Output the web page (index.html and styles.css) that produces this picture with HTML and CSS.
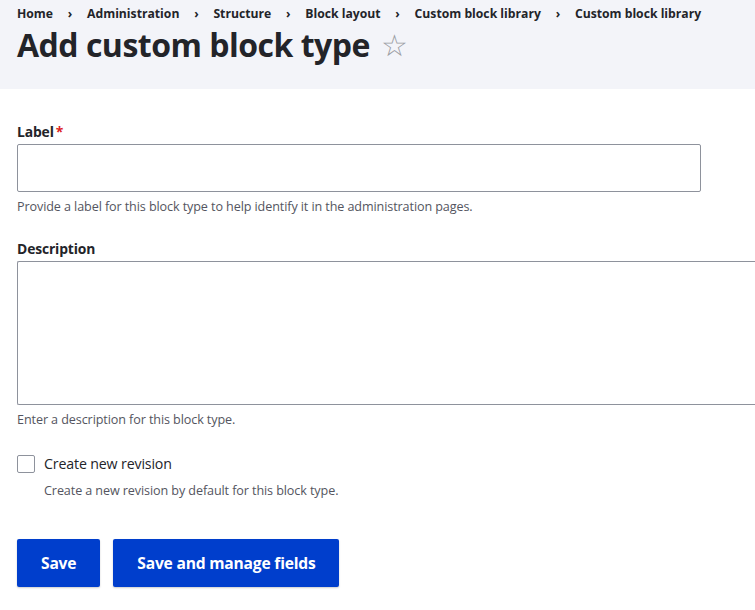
FILE: index.html
```html
<!DOCTYPE html>
<html lang="en">
<head>
<meta charset="utf-8">
<title>Add custom block type</title>
<link rel="stylesheet" href="styles.css">
</head>
<body>
<header class="page-header">
  <nav class="breadcrumb">
    <a href="#">Home</a><span class="sep">›</span>
    <a href="#">Administration</a><span class="sep">›</span>
    <a href="#">Structure</a><span class="sep">›</span>
    <a href="#">Block layout</a><span class="sep">›</span>
    <a href="#">Custom block library</a><span class="sep">›</span>
    <a href="#">Custom block library</a>
  </nav>
  <div class="title-row">
    <h1 class="page-title">Add custom block type</h1>
    <span class="star">☆</span>
  </div>
</header>
<main class="content">
  <form class="form">
    <div class="form-item">
      <label class="form-label">Label<span class="req">*</span></label>
      <input class="text-input" type="text">
      <div class="desc">Provide a label for this block type to help identify it in the administration pages.</div>
    </div>
    <div class="form-item form-item-desc">
      <label class="form-label">Description</label>
      <textarea class="textarea"></textarea>
      <div class="desc">Enter a description for this block type.</div>
    </div>
    <div class="form-item check-item">
      <div class="check-row">
        <span class="checkbox"></span>
        <span class="check-label">Create new revision</span>
      </div>
      <div class="desc check-desc">Create a new revision by default for this block type.</div>
    </div>
    <div class="actions">
      <button class="btn" type="button">Save</button>
      <button class="btn" type="button">Save and manage fields</button>
    </div>
  </form>
</main>
</body>
</html>
```
FILE: styles.css
```css
* { box-sizing: border-box; }
html, body { margin: 0; padding: 0; }
body {
  font-family: "Open Sans", "Noto Sans", sans-serif;
  color: #232429;
  background: #fff;
  overflow: hidden;
  width: 755px;
  height: 610px;
}
.page-header {
  background: #f3f4f9;
  height: 89px;
  padding: 6px 17px 0;
}
.breadcrumb {
  font-size: 12.2px;
  font-weight: 700;
  line-height: 16px;
  white-space: nowrap;
  display: flex;
  align-items: center;
}
.breadcrumb a { color: #232429; text-decoration: none; letter-spacing: 0; }
.breadcrumb .sep { display: inline-block; width: 34px; text-align: center; font-weight: 700; }
.title-row { display: flex; align-items: center; margin-top: 3px; }
.page-title {
  margin: 0;
  font-size: 32px;
  line-height: 40px;
  font-weight: 700;
  letter-spacing: -0.5px;
}
.star { color: #9a9ca3; font-size: 30px; margin-left: 11px; line-height: 1; }
.content { padding: 0 17px; }
.form { padding-top: 34px; }
.form-item { margin-bottom: 25px; }
.form-item-desc { margin-bottom: 26px; }
.form-label {
  display: block;
  font-size: 13.9px;
  font-weight: 700;
  line-height: 18px;
  margin-bottom: 3px;
  letter-spacing: -0.15px;
}
.req { color: #dc2323; margin-left: 2px; }
.text-input {
  display: block;
  width: 684px;
  height: 48px;
  border: 1px solid #8e929c;
  border-radius: 2px;
  background: #fff;
  margin: 0;
}
.textarea {
  display: block;
  width: 760px;
  height: 144px;
  border: 1px solid #8e929c;
  border-right: none;
  border-radius: 2px 0 0 2px;
  margin: 0;
  resize: none;
}
.desc {
  font-size: 12.6px;
  line-height: 16px;
  color: #545560;
  margin-top: 7px;
  letter-spacing: -0.1px;
}
.check-item { margin-bottom: 40px; }
.check-row { display: flex; align-items: center; gap: 9px; }
.checkbox {
  width: 18px;
  height: 18px;
  border: 1px solid #8e929c;
  border-radius: 2px;
  background: #fff;
  flex: none;
}
.check-label { font-size: 14.2px; line-height: 20px; letter-spacing: -0.15px; }
.check-desc { margin-left: 27px; margin-top: 9px; }
.actions { display: flex; gap: 13px; }
.btn {
  height: 48px;
  padding: 0 24px;
  border: none;
  border-radius: 2px;
  background: #003ecc;
  color: #fff;
  font-family: inherit;
  font-weight: 700;
  font-size: 15.6px;
  letter-spacing: -0.2px;
  box-shadow: 0 1px 2px rgba(0,0,0,0.2);
}
```
